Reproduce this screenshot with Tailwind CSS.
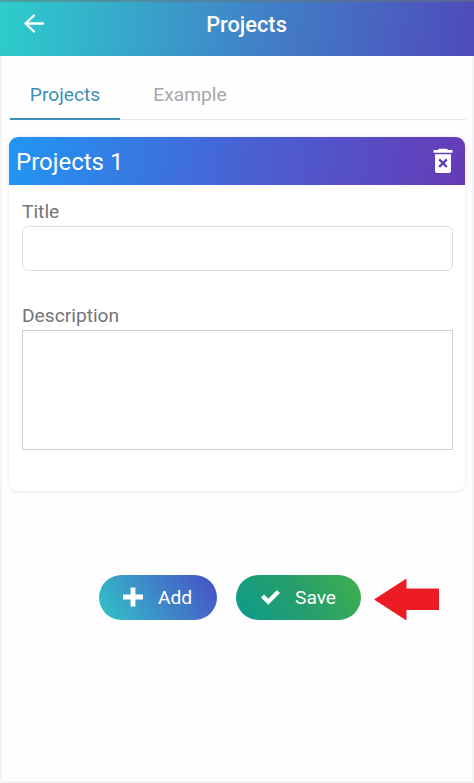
<!DOCTYPE html>
<html lang="en">
<head>
    <meta charset="UTF-8">
    <meta name="viewport" content="width=device-width, initial-scale=1.0">
    <title>Projects</title>
    <!-- Tailwind CSS for styling -->
    <script src="https://cdn.jsdelivr.net/npm/@tailwindcss/browser@4"></script>
</head>
<body class="h-[783px] flex flex-col bg-[#fefefe] font-[Roboto,sans-serif]">

    <!-- Header Section -->
    <header class="h-14 shrink-0 px-[22px] grid grid-cols-[1fr_auto_1fr] items-center text-white bg-linear-[100deg,#2dcecb,#3f87c9_50%,#4f4abb] shadow-[inset_0_2px_1px_#66777788]">
        <button aria-label="Back" class="justify-self-start mt-[-11px]">
            <svg class="w-6 h-6" fill="none" stroke="currentColor" viewBox="0 0 24 24">
                <path stroke-linecap="round" stroke-linejoin="round" stroke-width="2.3" d="M21 12.5H3.5M12 4.5L3.5 12.5L12 20.5"></path>
            </svg>
        </button>
        <h1 class="text-[21.8px] leading-6 font-medium mt-[-7px] ml-[19px]">Projects</h1>
    </header>

    <div class="flex-grow flex flex-col border-x-2 border-b-2 border-[#f3f2f5]">
        <!-- Tabs -->
        <nav class="h-16 shrink-0 ml-2 mr-1.5 flex text-[19.2px] border-b border-[#e4e8ea]">
            <a href="#" class="w-[110px] h-16 pt-[25px] text-center text-[#3e8fb5] border-b-2 border-[#3e8fb5]">Projects</a>
            <a href="#" class="w-[140px] pt-[25px] text-center text-[#a6a8aa]">Example</a>
        </nav>

        <!-- Main Content Section -->
        <main class="flex-grow px-[7px] pt-[17px]">
            <div class="h-[355px] rounded-[9px] bg-white border-b border-[#eeebf2] shadow-[0_0_3px_1px_#f0edf4] overflow-hidden">
                <div class="h-12 pl-[7px] pr-3 flex items-center justify-between text-white bg-linear-[100deg,#2196f3,#4763d4_50%,#673ab7]">
                    <h2 class="text-[24px] pt-0.5">Projects 1</h2>
                    <button aria-label="Delete">
                        <svg class="w-5 h-[26px]" fill="currentColor" viewBox="0 0 20 26">
                            <path d="M0.5 2H5L6 0.7H14L15 2H19.5V4.8H0.5ZM2 6.2H18V22.5Q18 25 15.5 25H4.5Q2 25 2 22.5Z"></path>
                            <path fill="none" stroke="#5b3fbb" stroke-width="2.4" d="M6.2 11.4L13.8 19M13.8 11.4L6.2 19"></path>
                        </svg>
                    </button>
                </div>
                <form class="pl-[13px] pr-3 pt-[13px] text-[19.2px] text-[#747578]">
                    <label for="title" class="block h-7 leading-7">Title</label>
                    <input id="title" type="text" class="block w-full h-[45px] rounded-md border border-[#dcdce2] bg-white">
                    <label for="description" class="block h-[29px] leading-[29px] mt-[30px]">Description</label>
                    <textarea id="description" class="block w-full h-[120px] resize-none border border-[#cfcfd1] bg-white"></textarea>
                </form>
            </div>

            <!-- Action buttons -->
            <div class="mt-[83px] ml-[90px] flex items-start text-[19.2px] text-white">
                <button class="w-[118px] h-[45px] rounded-full flex items-center pl-6 pt-0.5 bg-linear-[55deg,#2fc6c6,#3f87c9_50%,#474fc5]">
                    <svg class="w-5 h-5 mr-[15px] -mt-1" fill="none" stroke="currentColor" viewBox="0 0 20 20">
                        <path stroke-width="4.8" d="M0 10H20M10 0.5V19.5"></path>
                    </svg>
                    Add
                </button>
                <button class="w-[125px] h-[45px] ml-[19px] rounded-full flex items-center pl-[25px] pt-0.5 bg-linear-[55deg,#0c9c8b,#269e6c_50%,#3fb04c]">
                    <svg class="w-[19px] h-5 mr-[15px] -mt-1" fill="none" stroke="currentColor" viewBox="0 0 19 20">
                        <path stroke-width="4.2" d="M1.5 9L7.3 14.8L17.5 4.5"></path>
                    </svg>
                    Save
                </button>
                <svg class="w-[65px] h-[43px] ml-[13px] mt-[3px] text-[#ed1c24]" fill="currentColor" viewBox="0 0 65 43">
                    <path d="M0 21.5L32.5 0.5V10.5H65V32H32.5V42.5Z"></path>
                </svg>
            </div>
        </main>
    </div>
</body>
</html>
